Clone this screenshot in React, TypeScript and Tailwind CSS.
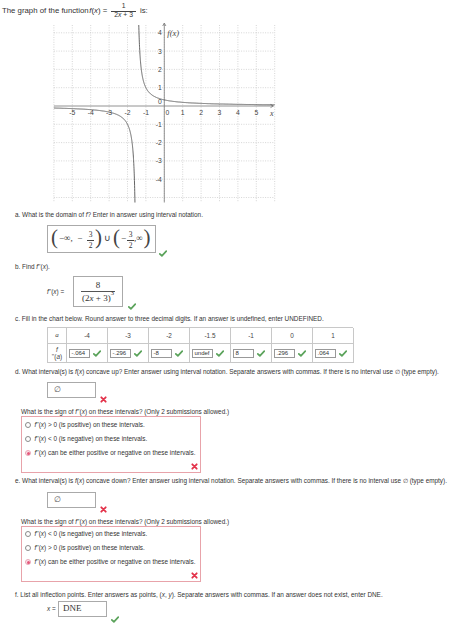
import React from "react";

function Check({ className = "" }: { className?: string }) {
  return (
    <svg width="8" height="7" viewBox="0 0 8 7" className={className}>
      <path d="M0.8 3.8 L2.9 5.9 L7.3 1.2" fill="none" stroke="#5ba35b" strokeWidth="1.7" strokeLinejoin="round" strokeLinecap="round" />
    </svg>
  );
}

function Cross({ className = "" }: { className?: string }) {
  return (
    <svg width="7" height="7" viewBox="0 0 7 7" className={className}>
      <path d="M1.3 1.3 L5.7 5.7 M5.7 1.3 L1.3 5.7" stroke="#e3324a" strokeWidth="1.8" strokeLinecap="round" />
    </svg>
  );
}

function Graph() {
  const X = (x: number) => 116.3 + 18.4 * x;
  const Y = (y: number) => 85 - 18.3 * y;
  const top = 4;
  const bottom = 181.5;
  const left = X(-6);
  const right = X(6);
  const f = (x: number) => 1 / (2 * x + 3);
  const p1: string[] = [];
  for (let i = 0; i <= 1100; i++) {
    const x = -6 + (i / 1100) * (6 - 1.5948);
    p1.push(`${X(x).toFixed(2)},${Y(f(x)).toFixed(2)}`);
  }
  const p2: string[] = [];
  for (let i = 0; i <= 1850; i++) {
    const x = -1.387 + (i / 1850) * 7.387;
    p2.push(`${X(x).toFixed(2)},${Y(f(x)).toFixed(2)}`);
  }
  const xs = [-6, -5, -4, -3, -2, -1, 0, 1, 2, 3, 4, 5, 6];
  const ys = [-5, -4, -3, -2, -1, 1, 2, 3, 4];
  const xl = [-5, -4, -3, -2, -1, 1, 2, 3, 4, 5];
  const yl = [4, 3, 2, 1, -1, -2, -3, -4];
  return (
    <svg width="232" height="185" viewBox="0 0 232 185" className="ml-[48px] block">
      {xs.map((x) => (
        <line key={"v" + x} x1={X(x)} x2={X(x)} y1={top} y2={bottom} stroke="#c4c4c4" strokeWidth="0.7" strokeDasharray="1 1.4" />
      ))}
      {ys.map((y) => (
        <line key={"h" + y} x1={left} x2={right} y1={Y(y)} y2={Y(y)} stroke="#c4c4c4" strokeWidth="0.7" strokeDasharray="1 1.4" />
      ))}
      <line x1={left} x2={225} y1={Y(0)} y2={Y(0)} stroke="#777" strokeWidth="0.8" />
      <path d={`M225.5 ${Y(0)} l-3 -1.6 M225.5 ${Y(0)} l-3 1.6`} stroke="#777" strokeWidth="0.8" fill="none" />
      <line x1={X(0)} x2={X(0)} y1={bottom} y2={2.5} stroke="#777" strokeWidth="0.8" />
      <path d={`M${X(0)} 2 l-1.6 3 M${X(0)} 2 l1.6 3`} stroke="#777" strokeWidth="0.8" fill="none" />
      <polyline points={p1.join(" ")} fill="none" stroke="#555" strokeWidth="0.9" />
      <polyline points={p2.join(" ")} fill="none" stroke="#555" strokeWidth="0.9" />
      <g fontFamily="'Liberation Sans', Arial, sans-serif" fontSize="6.8" fill="#444">
        {xl.map((x) => (
          <text key={"xl" + x} x={X(x)} y={Y(0) + 8.8} textAnchor="middle">
            {x < 0 ? "-" + -x : x}
          </text>
        ))}
        <text x={X(0) + 3} y={Y(0) + 8.8} textAnchor="middle">0</text>
        {yl.map((y) => (
          <text key={"yl" + y} x={X(0) - 2.5} y={Y(y) + 2.4} textAnchor="end">
            {y < 0 ? "-" + -y : y}
          </text>
        ))}
        <text x={X(0) - 2.5} y={Y(0) - 2} textAnchor="end">0</text>
      </g>
      <g fontFamily="'Liberation Serif', 'Times New Roman', serif" fontStyle="italic" fill="#444">
        <text x={X(0) + 3} y={15} fontSize="8.5">f(x)</text>
        <text x={222} y={Y(0) + 9.5} fontSize="8">x</text>
      </g>
    </svg>
  );
}

function Radio({ selected, children }: { selected?: boolean; children: React.ReactNode }) {
  return (
    <div className="flex h-[14px] items-center">
      <span
        className={
          selected
            ? "ml-[3px] flex h-[6px] w-[6px] items-center justify-center rounded-full border border-[#e9a9b8] bg-[#fbe3ea]"
            : "ml-[3px] flex h-[6px] w-[6px] items-center justify-center rounded-full border border-[#8a8a8a] bg-white"
        }
      >
        {selected ? <span className="h-[3px] w-[3px] rounded-full bg-[#e4587a]" /> : null}
      </span>
      <span className="ml-[3.5px]">{children}</span>
    </div>
  );
}

const Fpp = () => (
  <>
    <i>f</i>''(<i>x</i>)
  </>
);

function RadioBox({ first, second, pt }: { first: React.ReactNode; second: React.ReactNode; pt: string }) {
  return (
    <div className={"ml-[21px] flex w-[180px] flex-col border border-[#e8a3aa] " + pt}>
      <Radio>{first}</Radio>
      <Radio>{second}</Radio>
      <Radio selected>
        <Fpp /> can be either positive or negative on these intervals.
      </Radio>
      <div className="flex h-[12px] items-center justify-end pr-[2px]">
        <Cross />
      </div>
    </div>
  );
}

function Line({ children, className = "" }: { children: React.ReactNode; className?: string }) {
  return <div className={"h-[8px] whitespace-nowrap leading-[8px] " + className}>{children}</div>;
}

function MFrac({ n, d }: { n: React.ReactNode; d: React.ReactNode }) {
  return (
    <span className="inline-flex flex-col items-center text-[7.5px] leading-[10px]">
      <span className="px-[1.5px]">{n}</span>
      <span className="border-t border-[#444] px-[1.5px]">{d}</span>
    </span>
  );
}

function Paren({ c, className = "" }: { c: string; className?: string }) {
  return <span className={"text-[21px] font-light leading-none text-[#444] " + className}>{c}</span>;
}

export default function App() {
  const cols = ["-4", "-3", "-2", "-1.5", "-1", "0", "1"];
  const vals = ["-.064", "-.296", "-8", "undef", "8", ".296", ".064"];
  return (
    <div className="h-[631px] w-[474px] overflow-hidden bg-white font-['Liberation_Sans',Arial,sans-serif] text-[6.4px] text-[#333]">
      {/* header */}
      <div className="flex h-[21px] items-center pl-[2px] text-[7.8px]">
        <span>The graph of the function</span>
        <span className="ml-[0.5px]">
          <i>f</i>(<i>x</i>) =
        </span>
        <span className="ml-[4px] mr-[4px] inline-flex flex-col items-center text-[6.8px]">
          <span className="flex h-[9px] items-center">1</span>
          <span className="flex h-[9px] items-center border-t border-[#444] px-[3px]">
            2<i>x</i>&nbsp;+ 3
          </span>
        </span>
        <span>is:</span>
      </div>

      <div className="h-[185px]">
        <Graph />
      </div>

      <Line className="ml-[15px] mt-[5px]">
        a. What is the domain of <i>f</i>? Enter in answer using interval notation.
      </Line>
      <div className="mt-[6px] flex h-[28px]">
        <div className="ml-[47px] flex h-[28px] w-[109px] items-center border border-[#aaa] pl-[3px] font-['Liberation_Serif','Times_New_Roman',serif] text-[9px] text-[#333]">
          <Paren c="(" className="-mt-[3px]" />
          <span className="ml-[1px]">−∞,&nbsp;&nbsp;−</span>
          <span className="ml-[5px]">
            <MFrac n="3" d="2" />
          </span>
          <Paren c=")" className="-mt-[3px] ml-[1px]" />
          <span className="ml-[2px]">∪</span>
          <Paren c="(" className="-mt-[3px] ml-[2px]" />
          <span className="ml-[1px]">−</span>
          <span className="ml-[1px]">
            <MFrac n="3" d="2" />
          </span>
          <span>,∞</span>
          <Paren c=")" className="-mt-[3px] ml-[1px]" />
        </div>
        <Check className="ml-[3px] mt-[25px]" />
      </div>

      <Line className="ml-[15px] mt-[10px]">
        b. Find <i>f</i>''(<i>x</i>).
      </Line>
      <div className="mt-[5px] flex h-[31px]">
        <div className="ml-[47px] flex w-[26px] items-center">
          <span>
            <i>f</i>''(<i>x</i>) =
          </span>
        </div>
        <div className="flex h-[31px] w-[50px] flex-col items-center justify-center border border-[#aaa] font-['Liberation_Serif','Times_New_Roman',serif] text-[9px] text-[#333]">
          <span className="leading-[11px]">8</span>
          <span className="flex items-start border-t border-[#555] px-[1px] leading-[12px]">
            (2<i>x</i>&nbsp;+ 3)<span className="-mt-[3px] text-[6.5px] leading-[8px]">3</span>
          </span>
        </div>
        <Check className="ml-[5px] mt-[27px]" />
      </div>

      <Line className="ml-[15px] mt-[8px]">
        c. Fill in the chart below. Round answer to three decimal digits. If an answer is undefined, enter UNDEFINED.
      </Line>
      <div className="ml-[47px] mt-[4px] grid w-[306px] grid-cols-[19px_repeat(7,41px)] border-l border-t border-[#c8c8c8] text-[#444]">
        <div className="flex h-[16px] items-center justify-center border-b border-r border-[#c8c8c8] font-['Liberation_Serif',serif] text-[7px] italic">
          a
        </div>
        {cols.map((c) => (
          <div key={c} className="flex h-[16px] items-center justify-center border-b border-r border-[#c8c8c8]">
            {c}
          </div>
        ))}
        <div className="flex h-[19px] flex-col items-center justify-center border-b border-r border-[#c8c8c8] leading-[7px]">
          <i>f</i>
          <span>
            ''(<i>a</i>)
          </span>
        </div>
        {vals.map((v) => (
          <div key={v} className="flex h-[19px] items-center border-b border-r border-[#c8c8c8] pl-[2px]">
            <div className="flex h-[9px] w-[21px] items-center overflow-hidden border border-[#999] pl-[1.5px] text-[6px] text-[#333]">{v}</div>
            <Check className="ml-[3px]" />
          </div>
        ))}
      </div>

      <Line className="ml-[15px] mt-[5px]">
        d. What interval(s) is <i>f</i>(<i>x</i>) concave up? Enter answer using interval notation. Separate answers with commas. If there is no interval use ∅ (type empty).
      </Line>
      <div className="mt-[6px] flex h-[16px]">
        <div className="ml-[47px] flex h-[16px] w-[49px] items-center border border-[#aaa] pl-[6px] text-[8px] text-[#555]">∅</div>
        <Cross className="ml-[4px] mt-[14px]" />
      </div>
      <Line className="ml-[21px] mt-[10px]">
        What is the sign of <i>f</i>''(<i>x</i>) on these intervals? (Only 2 submissions allowed.)
      </Line>
      <RadioBox
        pt="pt-[1px]"
        first={
          <>
            <Fpp /> &gt; 0 (is positive) on these intervals.
          </>
        }
        second={
          <>
            <Fpp /> &lt; 0 (is negative) on these intervals.
          </>
        }
      />

      <Line className="ml-[15px] mt-[4px]">
        e. What interval(s) is <i>f</i>(<i>x</i>) concave down? Enter answer using interval notation. Separate answers with commas. If there is no interval use ∅ (type empty).
      </Line>
      <div className="mt-[7px] flex h-[16px]">
        <div className="ml-[47px] flex h-[16px] w-[49px] items-center border border-[#aaa] pl-[6px] text-[8px] text-[#555]">∅</div>
        <Cross className="ml-[4px] mt-[14px]" />
      </div>
      <Line className="ml-[21px] mt-[10px]">
        What is the sign of <i>f</i>''(<i>x</i>) on these intervals? (Only 2 submissions allowed.)
      </Line>
      <RadioBox
        pt="pt-0"
        first={
          <>
            <Fpp /> &lt; 0 (is negative) on these intervals.
          </>
        }
        second={
          <>
            <Fpp /> &gt; 0 (is positive) on these intervals.
          </>
        }
      />

      <Line className="ml-[15px] mt-[9px]">
        f. List all inflection points. Enter answers as points, (<i>x</i>, <i>y</i>). Separate answers with commas. If an answer does not exist, enter DNE.
      </Line>
      <div className="mt-[2px] flex h-[16px]">
        <div className="ml-[47px] flex w-[11px] items-center">
          <i>x</i>&nbsp;=
        </div>
        <div className="flex h-[16px] w-[49px] items-center border border-[#aaa] pl-[4px] font-['Liberation_Serif','Times_New_Roman',serif] text-[9px] text-[#333]">
          DNE
        </div>
        <Check className="ml-[4px] mt-[15px]" />
      </div>
    </div>
  );
}
